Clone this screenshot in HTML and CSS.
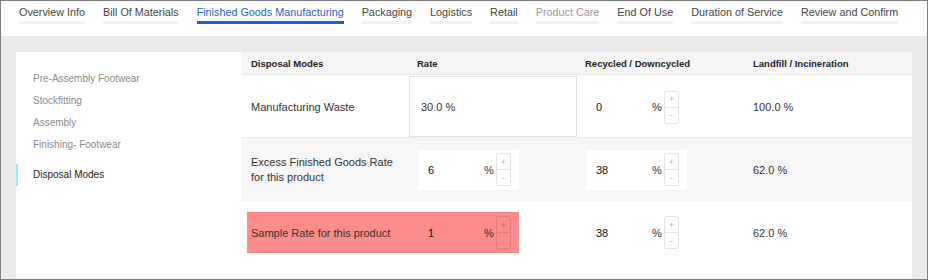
FILE: index.html
```html
<!DOCTYPE html>
<html>
<head>
<meta charset="utf-8">
<link rel="stylesheet" href="styles.css">
</head>
<body>
<div class="frame">
  <nav class="tabs">
    <div class="tab">Overview Info</div>
    <div class="tab">Bill Of Materials</div>
    <div class="tab active">Finished Goods Manufacturing</div>
    <div class="tab">Packaging</div>
    <div class="tab">Logistics</div>
    <div class="tab">Retail</div>
    <div class="tab disabled">Product Care</div>
    <div class="tab">End Of Use</div>
    <div class="tab">Duration of Service</div>
    <div class="tab">Review and Confirm</div>
  </nav>
  <div class="main">
    <div class="panel">
      <aside class="side">
        <div class="side-item">Pre-Assembly Footwear</div>
        <div class="side-item">Stockfitting</div>
        <div class="side-item">Assembly</div>
        <div class="side-item">Finishing- Footwear</div>
        <div class="side-item active">Disposal Modes</div>
      </aside>
      <section class="table">
        <div class="thead">
          <div class="th first">Disposal Modes</div>
          <div class="th">Rate</div>
          <div class="th">Recycled / Downcycled</div>
          <div class="th">Landfill / Incineration</div>
        </div>
        <div class="row row1">
          <div class="cell label">Manufacturing Waste</div>
          <div class="cell ratebox">30.0 %</div>
          <div class="cell wcell">
            <div class="num"><span class="val">0</span><span class="pct">%</span><span class="spin"><span class="up">+</span><span class="down">-</span></span></div>
          </div>
          <div class="cell last">100.0 %</div>
        </div>
        <div class="row row2">
          <div class="cell label"><span class="wrap">Excess Finished Goods Rate for this product</span></div>
          <div class="cell wcell">
            <div class="num"><span class="val">6</span><span class="pct">%</span><span class="spin"><span class="up">+</span><span class="down">-</span></span></div>
          </div>
          <div class="cell wcell">
            <div class="num"><span class="val">38</span><span class="pct">%</span><span class="spin"><span class="up">+</span><span class="down">-</span></span></div>
          </div>
          <div class="cell last">62.0 %</div>
        </div>
        <div class="row row3">
          <div class="err">
            <div class="err-label">Sample Rate for this product</div>
            <div class="num clear"><span class="val">1</span><span class="pct">%</span><span class="spin"><span class="up">+</span><span class="down">-</span></span></div>
          </div>
          <div class="cell wcell">
            <div class="num"><span class="val">38</span><span class="pct">%</span><span class="spin"><span class="up">+</span><span class="down">-</span></span></div>
          </div>
          <div class="cell last">62.0 %</div>
        </div>
      </section>
    </div>
  </div>
</div>
</body>
</html>
```
FILE: styles.css
```css
* { box-sizing: border-box; }
html, body { margin: 0; padding: 0; }
body {
  font-family: "Liberation Sans", Arial, sans-serif;
  color: #333;
  background: #fff;
}
.frame {
  width: 928px;
  height: 280px;
  border: 1px solid #7d7d7d;
  overflow: hidden;
  display: flex;
  flex-direction: column;
  background: #eaeaea;
}
.tabs {
  background: #fff;
  height: 35px;
  flex: 0 0 35px;
  display: flex;
  gap: 18px;
  padding-left: 18px;
}
.tab {
  padding-top: 5px;
  height: 23px;
  line-height: 13px;
  font-size: 10.8px;
  color: #444;
  border-bottom: 3px solid #f2f2f2;
  white-space: nowrap;
}
.tab.active {
  color: #2463d6;
  border-bottom-color: #1a5fd3;
}
.tab.disabled { color: #9a9a9a; }

.main {
  flex: 1;
  padding: 16px 15px 0 15px;
  min-height: 0;
}
.panel {
  background: #fff;
  display: flex;
  height: 100%;
}
.side {
  width: 225px;
  flex: 0 0 225px;
  padding-top: 16px;
}
.side-item {
  height: 22px;
  line-height: 22px;
  padding-left: 17px;
  font-size: 10px;
  color: #8a8a8a;
}
.side-item.active {
  margin-top: 8px;
  color: #222;
  border-left: 2px solid #a3e7f6;
  padding-left: 15px;
}

.table { flex: 1; }
.thead, .row {
  display: grid;
  grid-template-columns: 168px 168px 168px 1fr;
}
.thead {
  height: 23px;
  background: #f5f5f5;
  border-bottom: 1px solid #e6e6e6;
  align-items: center;
  font-weight: bold;
  font-size: 9.5px;
  color: #222;
}
.th { padding-left: 8px; }
.th.first { padding-left: 10px; }

.row {
  height: 63px;
  align-items: center;
  font-size: 11px;
}
.row1 { border-bottom: 1px solid #ececec; padding-top: 2px; }
.row2 { background: #f6f6f6; }

.cell.label {
  padding-left: 10px;
  line-height: 15px;
}
.wrap { display: block; width: 145px; }
.cell.last { padding-left: 8px; }

.ratebox {
  align-self: stretch;
  margin-top: -1px;
  border: 1px solid #e1e1e1;
  display: flex;
  align-items: center;
  padding-left: 11px;
}
.wcell { padding-left: 9px; }

.num {
  width: 101px;
  height: 40px;
  background: #fff;
  display: flex;
  align-items: center;
  padding-left: 10px;
  color: #111;
}
.num.clear { background: transparent; }
.val { width: 56px; }
.pct { width: 12px; color: #333; }
.spin {
  width: 15px;
  height: 33px;
  border: 1px solid rgba(0, 0, 0, 0.1);
  border-radius: 2px;
  display: flex;
  flex-direction: column;
}
.spin span {
  flex: 1;
  display: flex;
  align-items: center;
  justify-content: center;
  font-size: 9px;
  color: #b3b3b3;
}
.spin .down { border-top: 1px solid rgba(0, 0, 0, 0.1); }

.err {
  grid-column: 1 / 3;
  margin-left: 6px;
  width: 272px;
  height: 41px;
  background: #fc8b8b;
  display: flex;
  align-items: center;
}
.err-label {
  width: 171px;
  padding-left: 4px;
}
.err .spin span { color: #c06a6a; }
```
